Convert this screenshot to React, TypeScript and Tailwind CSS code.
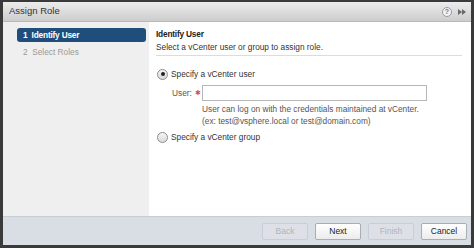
import type { FC } from "react";

const font = { fontFamily: '"Liberation Sans", Arial, sans-serif' };

const Radio: FC<{ checked?: boolean; label: string }> = ({ checked, label }) => (
  <label className="flex h-[12px] items-center gap-[3px] text-[8.3px] text-[#333]">
    <span className="flex h-[11px] w-[11px] items-center justify-center rounded-full border border-[#8d8d8d] bg-gradient-to-b from-[#f6f6f6] to-[#dadada]">
      {checked && <span className="h-[4px] w-[4px] rounded-full bg-[#222]" />}
    </span>
    {label}
  </label>
);

const Btn: FC<{ label: string; disabled?: boolean }> = ({ label, disabled }) => (
  <button
    type="button"
    className={
      disabled
        ? "h-[17px] w-[46px] rounded-[2px] border border-[#c9ced6] bg-[#dde1e7] text-[8.5px] text-[#b0b4ba]"
        : "h-[17px] w-[46px] rounded-[2px] border border-[#a9aeb6] bg-gradient-to-b from-white to-[#ececec] text-[8.5px] text-[#222]"
    }>
    {label}
  </button>
);

export default function App() {
  return (
    <div className="h-[248px] w-[474px] bg-[#3a3a3a] pt-[2px] pb-[3px] pl-[3px] pr-[3px]" style={font}>
      <div className="flex h-full flex-col bg-white">
        {/* title bar */}
        <div className="flex h-[20px] items-center justify-between border-b border-[#b9b9b9] bg-gradient-to-b from-[#ececec] to-[#cdcdcd] pl-[6px] pr-[5px]">
          <span className="text-[9.5px] text-[#333]">Assign Role</span>
          <div className="flex items-center gap-[6px]">
            <span className="flex h-[10px] w-[10px] items-center justify-center rounded-full border border-[#9a9a9a] bg-[#f2f2f2] text-[7px] font-bold leading-none text-[#777]">
              ?
            </span>
            <svg width="8" height="6" viewBox="0 0 8 6">
              <path d="M0 0L4 3L0 6Z M4 0L8 3L4 6Z" fill="#6a6a6a" />
            </svg>
          </div>
        </div>

        <div className="flex flex-1">
          {/* steps */}
          <div className="w-[146px] bg-[#efefef] pt-[6px] pl-[14px] pr-[3px]">
            <div className="flex h-[14px] items-center rounded-[3px] bg-[#1f4e7d] pl-[6px] text-[8.3px] font-bold tracking-[-0.2px] text-white">
              1&nbsp;&nbsp;Identify User
            </div>
            <div className="mt-[3px] flex h-[14px] items-center pl-[6px] text-[8.3px] text-[#9a9a9a]">2&nbsp;&nbsp;Select Roles</div>
          </div>

          {/* content */}
          <div className="flex-1 pl-[7px] pr-[9px] pt-[5px] text-[8.3px] leading-[12px] text-[#333]">
            <div className="pt-[1px] font-bold tracking-[-0.2px] text-[#222]">Identify User</div>
            <div className="mt-[1px]">Select a vCenter user or group to assign role.</div>
            <div className="mt-[2px] border-t border-[#dcdcdc]" />
            <div className="mt-[12px] pl-[1px]">
              <Radio checked label="Specify a vCenter user" />
            </div>
            <div className="mt-[5px] flex items-center pl-[16px]">
              <span className="text-[#555]">User:</span>
              <span className="ml-[3px] text-[7px] text-[#d9534f]">✱</span>
              <input className="ml-[1px] h-[16px] w-[225px] border border-[#b7b7b7] bg-white outline-none" />
            </div>
            <div className="mt-[2px] pl-[46px] text-[#555]">
              <div>User can log on with the credentials maintained at vCenter.</div>
              <div>(ex: test@vsphere.local or test@domain.com)</div>
            </div>
            <div className="mt-[4px] pl-[1px]">
              <Radio label="Specify a vCenter group" />
            </div>
          </div>
        </div>

        {/* footer */}
        <div className="flex h-[29px] items-center justify-end gap-[7px] border-t border-[#c9ced6] bg-[#d9dde4] pr-[4px]">
          <Btn label="Back" disabled />
          <Btn label="Next" />
          <Btn label="Finish" disabled />
          <Btn label="Cancel" />
        </div>
      </div>
    </div>
  );
}
